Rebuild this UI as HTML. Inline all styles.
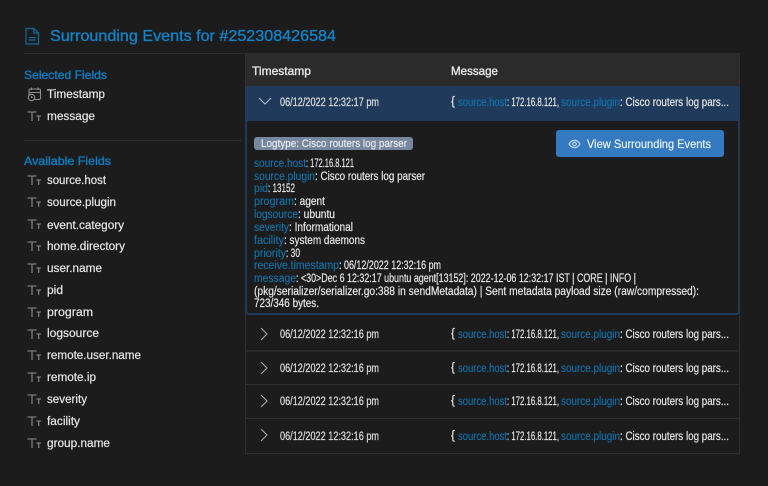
<!DOCTYPE html>
<html><head><meta charset="utf-8"><style>
html,body{margin:0;padding:0;background:#1c1c1c;width:768px;height:486px;overflow:hidden}
svg{display:block}
text{font-family:"Liberation Sans",sans-serif;font-size:11.5px;fill:#e6e6e6;stroke:#e6e6e6;stroke-width:.2px}
.b{fill:#0f85cc;stroke:#0f85cc;stroke-width:.3px}
.k{fill:#0f76b2;stroke:#0f76b2;stroke-width:.1px}
.h{font-size:12px;fill:#0c7dc4;stroke:#0c7dc4;stroke-width:.35px}
.th{font-size:12px;fill:#e8e8e8;stroke:#e8e8e8;stroke-width:.35px}
.d{fill:#d6d6d6;stroke:#d6d6d6;stroke-width:.3px}
.ic{fill:none;stroke:#8b8f94;stroke-width:1.1}
.ch{fill:none;stroke:#a8a8a8;stroke-width:1.1}
</style></head><body>
<svg width="768" height="486" viewBox="0 0 768 486" xmlns="http://www.w3.org/2000/svg">
<rect width="768" height="486" fill="#1c1c1c"/>
<!-- title -->
<g fill="none" stroke="#0f6a9e" stroke-width="1.200"><path d="M26 28.500h8l4.500 4.500v11h-12.500z"/><path d="M34 28.500v4.500h4.500M29 37.500h6.500M29 40h6.500"/></g>
<text x="50" y="41" class="b" style="font-size:16px" textLength="286" lengthAdjust="spacingAndGlyphs">Surrounding Events for #252308426584</text>
<rect x="24" y="53" width="716" height="1" fill="#2c2c2c"/>
<!-- left -->
<text x="24" y="79" class="h" textLength="83" lengthAdjust="spacingAndGlyphs">Selected Fields</text>
<g class="ic"><rect x="29" y="89" width="11.500" height="10.500" rx="1.500"/><path d="M29 92.500h11.500M31.500 87.500v2.500M38 87.500v2.500"/><circle cx="31.500" cy="97.500" r="3.200" fill="#1c1c1c"/><path d="M31.500 96v1.500h1.300"/></g>
<text x="47" y="98" textLength="58" lengthAdjust="spacingAndGlyphs">Timestamp</text>
<path class="ic" d="M27.500 112h9M32 112v9M36.500 116h4.500M38.700 116v5"/>
<text x="47" y="120" textLength="48" lengthAdjust="spacingAndGlyphs">message</text>
<rect x="24" y="140" width="218" height="1" fill="#2c2c2c"/>
<text x="24" y="165" class="h" textLength="87" lengthAdjust="spacingAndGlyphs">Available Fields</text>
<path class="ic" d="M27.500 176h9M32 176v9M36.500 180h4.500M38.700 180v5"/>
<text x="47" y="184" textLength="59" lengthAdjust="spacingAndGlyphs">source.host</text>
<path class="ic" d="M27.500 198h9M32 198v9M36.500 202h4.500M38.700 202v5"/>
<text x="47" y="206" textLength="69" lengthAdjust="spacingAndGlyphs">source.plugin</text>
<path class="ic" d="M27.500 220h9M32 220v9M36.500 224h4.500M38.700 224v5"/>
<text x="47" y="229" textLength="77" lengthAdjust="spacingAndGlyphs">event.category</text>
<path class="ic" d="M27.500 242h9M32 242v9M36.500 246h4.500M38.700 246v5"/>
<text x="47" y="250" textLength="78" lengthAdjust="spacingAndGlyphs">home.directory</text>
<path class="ic" d="M27.500 264h9M32 264v9M36.500 268h4.500M38.700 268v5"/>
<text x="47" y="272" textLength="55" lengthAdjust="spacingAndGlyphs">user.name</text>
<path class="ic" d="M27.500 286h9M32 286v9M36.500 290h4.500M38.700 290v5"/>
<text x="47" y="294" textLength="16" lengthAdjust="spacingAndGlyphs">pid</text>
<path class="ic" d="M27.500 308h9M32 308v9M36.500 312h4.500M38.700 312v5"/>
<text x="47" y="316" textLength="46" lengthAdjust="spacingAndGlyphs">program</text>
<path class="ic" d="M27.500 330h9M32 330v9M36.500 334h4.500M38.700 334v5"/>
<text x="47" y="337" textLength="52" lengthAdjust="spacingAndGlyphs">logsource</text>
<path class="ic" d="M27.500 351h9M32 351v9M36.500 355h4.500M38.700 355v5"/>
<text x="47" y="359" textLength="94" lengthAdjust="spacingAndGlyphs">remote.user.name</text>
<path class="ic" d="M27.500 373h9M32 373v9M36.500 377h4.500M38.700 377v5"/>
<text x="47" y="381" textLength="49" lengthAdjust="spacingAndGlyphs">remote.ip</text>
<path class="ic" d="M27.500 395h9M32 395v9M36.500 399h4.500M38.700 399v5"/>
<text x="47" y="403" textLength="40" lengthAdjust="spacingAndGlyphs">severity</text>
<path class="ic" d="M27.500 417h9M32 417v9M36.500 421h4.500M38.700 421v5"/>
<text x="47" y="425" textLength="33" lengthAdjust="spacingAndGlyphs">facility</text>
<path class="ic" d="M27.500 439h9M32 439v9M36.500 443h4.500M38.700 443v5"/>
<text x="47" y="447" textLength="63" lengthAdjust="spacingAndGlyphs">group.name</text>
<!-- table -->
<rect x="245" y="54" width="495" height="32" fill="#2b2b2b"/>
<rect x="245" y="54" width="1" height="400" fill="#303030"/>
<rect x="739" y="54" width="1" height="400" fill="#303030"/>
<rect x="245" y="453" width="495" height="1" fill="#303030"/>
<rect x="245" y="350" width="495" height="1.500" fill="#2c2c2c"/>
<rect x="245" y="384" width="495" height="1" fill="#303030"/>
<rect x="245" y="418" width="495" height="1" fill="#303030"/>
<text x="252" y="75" class="th" textLength="59" lengthAdjust="spacingAndGlyphs">Timestamp</text>
<text x="451" y="75" class="th" textLength="47" lengthAdjust="spacingAndGlyphs">Message</text>
<!-- expanded -->
<rect x="246" y="87" width="493" height="227" rx="3" fill="#1c1c1c" stroke="#203a5c" stroke-width="2"/>
<path d="M245 121V89a3 3 0 0 1 3-3h489a3 3 0 0 1 3 3v32z" fill="#203a5c"/>
<path class="ch" style="stroke:#b4bcc8" d="M259 98l6 6 6-6"/>
<text x="280" y="106" class="d" textLength="99" lengthAdjust="spacingAndGlyphs">06/12/2022 12:32:17 pm</text>
<text x="451" y="105">{</text>
<text x="458" y="106" class="k" textLength="49" lengthAdjust="spacingAndGlyphs">source.host</text>
<text x="507" y="106" textLength="52" lengthAdjust="spacingAndGlyphs">: 172.16.8.121,</text>
<text x="561" y="106" class="k" textLength="59" lengthAdjust="spacingAndGlyphs">source.plugin</text>
<text x="620" y="106" textLength="109" lengthAdjust="spacingAndGlyphs">: Cisco routers log pars...</text>
<rect x="254" y="137" width="159" height="13" rx="3" fill="#76879f"/>
<text x="261" y="147" textLength="146" lengthAdjust="spacingAndGlyphs" style="fill:#e8ebef;stroke:#e8ebef;font-size:11px">Logtype: Cisco routers log parser</text>
<rect x="556" y="130" width="168" height="27" rx="3" fill="#337ac0"/>
<g fill="none" stroke="#dbe8f5" stroke-width="1"><path d="M569 144c3-5 8-5 11 0c-3 5-8 5-11 0z"/><circle cx="574.500" cy="144" r="1.800"/></g>
<text x="587" y="148" textLength="124" lengthAdjust="spacingAndGlyphs" style="fill:#eaf2fa;stroke:#eaf2fa;font-size:12px">View Surrounding Events</text>
<text x="254" y="167" class="k" textLength="52" lengthAdjust="spacingAndGlyphs">source.host</text><text x="306" y="167" textLength="48" lengthAdjust="spacingAndGlyphs">: 172.16.8.121</text>
<text x="254" y="180" class="k" textLength="61" lengthAdjust="spacingAndGlyphs">source.plugin</text><text x="315" y="180" textLength="110" lengthAdjust="spacingAndGlyphs">: Cisco routers log parser</text>
<text x="254" y="192" class="k" textLength="14" lengthAdjust="spacingAndGlyphs">pid</text><text x="268" y="192" textLength="27" lengthAdjust="spacingAndGlyphs">: 13152</text>
<text x="254" y="205" class="k" textLength="40" lengthAdjust="spacingAndGlyphs">program</text><text x="294" y="205" textLength="31" lengthAdjust="spacingAndGlyphs">: agent</text>
<text x="254" y="218" class="k" textLength="44" lengthAdjust="spacingAndGlyphs">logsource</text><text x="298" y="218" textLength="37" lengthAdjust="spacingAndGlyphs">: ubuntu</text>
<text x="254" y="231" class="k" textLength="35" lengthAdjust="spacingAndGlyphs">severity</text><text x="289" y="231" textLength="64" lengthAdjust="spacingAndGlyphs">: Informational</text>
<text x="254" y="244" class="k" textLength="30" lengthAdjust="spacingAndGlyphs">facility</text><text x="284" y="244" textLength="81" lengthAdjust="spacingAndGlyphs">: system daemons</text>
<text x="254" y="257" class="k" textLength="32" lengthAdjust="spacingAndGlyphs">priority</text><text x="286" y="257" textLength="14" lengthAdjust="spacingAndGlyphs">: 30</text>
<text x="254" y="269" class="k" textLength="85" lengthAdjust="spacingAndGlyphs">receive.timestamp</text><text x="339" y="269" textLength="102" lengthAdjust="spacingAndGlyphs">: 06/12/2022 12:32:16 pm</text>
<text x="254" y="282" class="k" textLength="42" lengthAdjust="spacingAndGlyphs">message</text><text x="296" y="282" textLength="340" lengthAdjust="spacingAndGlyphs">: &lt;30&gt;Dec 6 12:32:17 ubuntu agent[13152]: 2022-12-06 12:32:17 IST | CORE | INFO |</text>
<text x="254" y="295" textLength="445" lengthAdjust="spacingAndGlyphs">(pkg/serializer/serializer.go:388 in sendMetadata) | Sent metadata payload size (raw/compressed):</text>
<text x="254" y="307" textLength="65" lengthAdjust="spacingAndGlyphs">723/346 bytes.</text>
<!-- rows -->
<path class="ch" d="M261 328l6 6-6 6"/>
<text x="280" y="338" class="d" textLength="99" lengthAdjust="spacingAndGlyphs">06/12/2022 12:32:16 pm</text>
<text x="451" y="337">{</text><text x="458" y="338" class="k" textLength="49" lengthAdjust="spacingAndGlyphs">source.host</text><text x="507" y="338" textLength="52" lengthAdjust="spacingAndGlyphs">: 172.16.8.121,</text><text x="561" y="338" class="k" textLength="59" lengthAdjust="spacingAndGlyphs">source.plugin</text><text x="620" y="338" textLength="109" lengthAdjust="spacingAndGlyphs">: Cisco routers log pars...</text>
<path class="ch" d="M261 362l6 6-6 6"/>
<text x="280" y="372" class="d" textLength="99" lengthAdjust="spacingAndGlyphs">06/12/2022 12:32:16 pm</text>
<text x="451" y="371">{</text><text x="458" y="372" class="k" textLength="49" lengthAdjust="spacingAndGlyphs">source.host</text><text x="507" y="372" textLength="52" lengthAdjust="spacingAndGlyphs">: 172.16.8.121,</text><text x="561" y="372" class="k" textLength="59" lengthAdjust="spacingAndGlyphs">source.plugin</text><text x="620" y="372" textLength="109" lengthAdjust="spacingAndGlyphs">: Cisco routers log pars...</text>
<path class="ch" d="M261 395l6 6-6 6"/>
<text x="280" y="405" class="d" textLength="99" lengthAdjust="spacingAndGlyphs">06/12/2022 12:32:16 pm</text>
<text x="451" y="404">{</text><text x="458" y="405" class="k" textLength="49" lengthAdjust="spacingAndGlyphs">source.host</text><text x="507" y="405" textLength="52" lengthAdjust="spacingAndGlyphs">: 172.16.8.121,</text><text x="561" y="405" class="k" textLength="59" lengthAdjust="spacingAndGlyphs">source.plugin</text><text x="620" y="405" textLength="109" lengthAdjust="spacingAndGlyphs">: Cisco routers log pars...</text>
<path class="ch" d="M261 429l6 6-6 6"/>
<text x="280" y="440" class="d" textLength="99" lengthAdjust="spacingAndGlyphs">06/12/2022 12:32:16 pm</text>
<text x="451" y="439">{</text><text x="458" y="440" class="k" textLength="49" lengthAdjust="spacingAndGlyphs">source.host</text><text x="507" y="440" textLength="52" lengthAdjust="spacingAndGlyphs">: 172.16.8.121,</text><text x="561" y="440" class="k" textLength="59" lengthAdjust="spacingAndGlyphs">source.plugin</text><text x="620" y="440" textLength="109" lengthAdjust="spacingAndGlyphs">: Cisco routers log pars...</text>
</svg>
</body></html>
